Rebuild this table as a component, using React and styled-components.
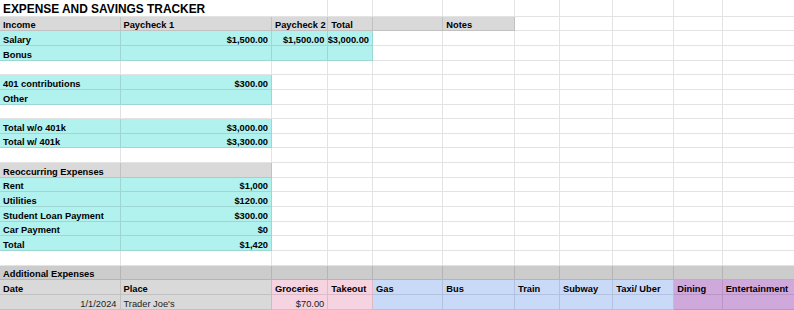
import React from 'react'
import styled, { createGlobalStyle } from 'styled-components'

const GlobalStyle = createGlobalStyle`
    body {
        margin: 0;
        background: #ffffff;
        overflow: hidden;
    }
`

const colors = {
    white: '#ffffff',
    cyan: '#b1f1ee',
    gray: '#d9d9d9',
    dark: '#cccccc',
    pink: '#f6d3e1',
    blue: '#c9daf8',
    purple: '#d0a9dc',
}

const Sheet = styled.div`
    display: grid;
    grid-template-columns: 120.5px 151.5px 56.3px 44.7px 70.3px 71.7px 45px 53.3px 61px 48.4px 120px;
    grid-template-rows: 16.7px repeat(20, 14.65px);
    width: 794px;
    height: 310px;
    overflow: hidden;
    font-family: 'Liberation Sans', Arial, sans-serif;
`

const Cell = styled.div`
    box-sizing: border-box;
    display: flex;
    align-items: flex-end;
    justify-content: ${(props) => (props.$align === 'r' ? 'flex-end' : 'flex-start')};
    grid-column: span ${(props) => props.$span || 1};
    padding: 0 3px 1px 3px;
    background: ${(props) => colors[props.$bg || 'white']};
    border-right: 1px solid rgba(0, 0, 0, 0.11);
    border-bottom: 1px solid rgba(0, 0, 0, 0.11);
    font-size: 9.3px;
    line-height: 7px;
    font-weight: ${(props) => (props.$light ? 400 : 700)};
    color: ${(props) => (props.$light ? '#222222' : '#000000')};
    white-space: nowrap;
    overflow: hidden;
`

const Title = styled(Cell)`
    font-size: 11.9px;
    line-height: 14px;
    padding-bottom: 0;
    border-right: none;
`

const COLS = 11

// one row = list of cells; missing cells are blank white
const fill = (cells) => {
    const out = [...cells]
    let used = out.reduce((n, c) => n + (c.span || 1), 0)
    while (used < COLS) {
        out.push({})
        used++
    }
    return out
}

const c = (bg, n) => Array.from({ length: n }, () => ({ bg }))

const rows = [
    [
        { t: 'Income', bg: 'gray' },
        { t: 'Paycheck 1', bg: 'gray' },
        { t: 'Paycheck 2', bg: 'gray' },
        { t: 'Total', bg: 'gray' },
        { bg: 'gray' },
        { t: 'Notes', bg: 'gray' },
    ],
    [
        { t: 'Salary', bg: 'cyan' },
        { t: '$1,500.00', bg: 'cyan', a: 'r' },
        { t: '$1,500.00', bg: 'cyan', a: 'r' },
        { t: '$3,000.00', bg: 'cyan', a: 'r' },
    ],
    [{ t: 'Bonus', bg: 'cyan' }, ...c('cyan', 3)],
    [],
    [
        { t: '401 contributions', bg: 'cyan' },
        { t: '$300.00', bg: 'cyan', a: 'r' },
    ],
    [{ t: 'Other', bg: 'cyan' }, ...c('cyan', 1)],
    [],
    [
        { t: 'Total w/o 401k', bg: 'cyan' },
        { t: '$3,000.00', bg: 'cyan', a: 'r' },
    ],
    [
        { t: 'Total w/ 401k', bg: 'cyan' },
        { t: '$3,300.00', bg: 'cyan', a: 'r' },
    ],
    [],
    [{ t: 'Reoccurring Expenses', bg: 'gray' }, ...c('gray', 1)],
    [{ t: 'Rent', bg: 'cyan' }, { t: '$1,000', bg: 'cyan', a: 'r' }],
    [{ t: 'Utilities', bg: 'cyan' }, { t: '$120.00', bg: 'cyan', a: 'r' }],
    [{ t: 'Student Loan Payment', bg: 'cyan' }, { t: '$300.00', bg: 'cyan', a: 'r' }],
    [{ t: 'Car Payment', bg: 'cyan' }, { t: '$0', bg: 'cyan', a: 'r' }],
    [{ t: 'Total', bg: 'cyan' }, { t: '$1,420', bg: 'cyan', a: 'r' }],
    [],
    [{ t: 'Additional Expenses', bg: 'dark' }, ...c('dark', 10)],
    [
        { t: 'Date', bg: 'gray' },
        { t: 'Place', bg: 'gray' },
        { t: 'Groceries', bg: 'pink' },
        { t: 'Takeout', bg: 'pink' },
        { t: 'Gas', bg: 'blue' },
        { t: 'Bus', bg: 'blue' },
        { t: 'Train', bg: 'blue' },
        { t: 'Subway', bg: 'blue' },
        { t: 'Taxi/ Uber', bg: 'blue' },
        { t: 'Dining', bg: 'purple' },
        { t: 'Entertainment', bg: 'purple' },
    ],
    [
        { t: '1/1/2024', bg: 'gray', a: 'r', light: true },
        { t: "Trader Joe's", bg: 'gray', light: true },
        { t: '$70.00', bg: 'pink', a: 'r', light: true },
        { bg: 'pink' },
        ...c('blue', 5),
        ...c('purple', 2),
    ],
]

const App = () => (
    <>
        <GlobalStyle />
        <Sheet>
            <Title $span={2}>EXPENSE AND SAVINGS TRACKER</Title>
            {fill([]).slice(2).map((cell, i) => (
                <Cell key={'t' + i} />
            ))}
            {rows.map((row, r) =>
                fill(row).map((cell, i) => (
                    <Cell
                        key={r + '-' + i}
                        $bg={cell.bg}
                        $align={cell.a}
                        $span={cell.span}
                        $light={cell.light}
                    >
                        {cell.t}
                    </Cell>
                ))
            )}
        </Sheet>
    </>
)

export default App
